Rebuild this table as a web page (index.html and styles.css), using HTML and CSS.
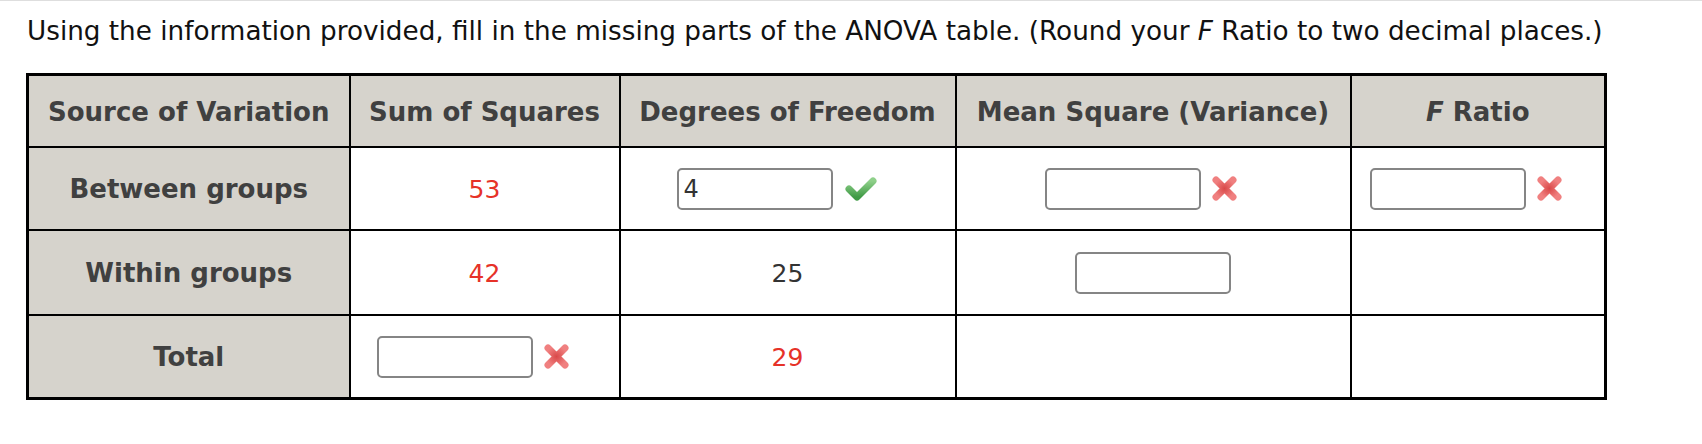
FILE: index.html
```html
<!DOCTYPE html>
<html>
<head>
<meta charset="utf-8">
<link rel="stylesheet" href="styles.css">
</head>
<body>
<div class="page">
  <p class="question">Using the information provided, fill in the missing parts of the ANOVA table. (Round your <i>F</i> Ratio to two decimal places.)</p>
  <table class="anova">
    <colgroup>
      <col class="c1"><col class="c2"><col class="c3"><col class="c4"><col class="c5">
    </colgroup>
    <thead>
      <tr class="r-head">
        <th>Source of Variation</th>
        <th>Sum of Squares</th>
        <th>Degrees of Freedom</th>
        <th>Mean Square (Variance)</th>
        <th><i>F</i> Ratio</th>
      </tr>
    </thead>
    <tbody>
      <tr class="r1">
        <th>Between groups</th>
        <td class="num red">53</td>
        <td><div class="field"><input class="box" type="text" value="4"><span class="mark mark-ok"><svg width="32" height="26" viewBox="0 0 32 26"><defs><linearGradient id="gchk" x1="0" y1="0" x2="0" y2="1"><stop offset="0" stop-color="#8fd08a"/><stop offset="1" stop-color="#3f9a45"/></linearGradient></defs><polyline points="4,13 12,21 28,5" fill="none" stroke="url(#gchk)" stroke-width="7" stroke-linecap="round" stroke-linejoin="round"/></svg></span></div></td>
        <td><div class="field"><input class="box" type="text" value=""><span class="mark"><svg width="27" height="27" viewBox="0 0 27 27"><defs><radialGradient id="gx1" cx="0.5" cy="0.5" r="0.6"><stop offset="0" stop-color="#d94848"/><stop offset="1" stop-color="#f08080"/></radialGradient></defs><path d="M5,5 L22,22 M22,5 L5,22" fill="none" stroke="url(#gx1)" stroke-width="7" stroke-linecap="round"/></svg></span></div></td>
        <td><div class="field"><input class="box" type="text" value=""><span class="mark"><svg width="27" height="27" viewBox="0 0 27 27"><path d="M5,5 L22,22 M22,5 L5,22" fill="none" stroke="url(#gx1)" stroke-width="7" stroke-linecap="round"/></svg></span></div></td>
      </tr>
      <tr class="r2">
        <th>Within groups</th>
        <td class="num red">42</td>
        <td class="num">25</td>
        <td><div class="field"><input class="box" type="text" value=""></div></td>
        <td></td>
      </tr>
      <tr class="r3">
        <th>Total</th>
        <td><div class="field"><input class="box" type="text" value=""><span class="mark"><svg width="27" height="27" viewBox="0 0 27 27"><path d="M5,5 L22,22 M22,5 L5,22" fill="none" stroke="url(#gx1)" stroke-width="7" stroke-linecap="round"/></svg></span></div></td>
        <td class="num red">29</td>
        <td></td>
        <td></td>
      </tr>
    </tbody>
  </table>
</div>
</body>
</html>
```

FILE: styles.css
```css
html, body {
  margin: 0;
  padding: 0;
  background: #fff;
}
.page {
  border-top: 1px solid #dedede;
  padding: 0 0 0 26px;
  font-family: "DejaVu Sans", Verdana, sans-serif;
  color: #111;
}
.question {
  margin: 16px 0 27px 1px;
  font-size: 26.25px;
  line-height: 29px;
  white-space: nowrap;
}
.anova {
  border-collapse: collapse;
  table-layout: fixed;
  width: 1578px;
  border: 3px solid #000;
}
.c1 { width: 322px; }
.c2 { width: 270px; }
.c3 { width: 336px; }
.c4 { width: 395px; }
.c5 { width: 255px; }
.anova th, .anova td {
  border: 2px solid #000;
  padding: 0;
  text-align: center;
  vertical-align: middle;
}
.anova th {
  background: #d6d3cc;
  color: #404040;
  font-weight: bold;
  font-size: 26px;
  padding-top: 2px;
}
.anova td {
  background: #fff;
}
.anova td.num {
  padding-top: 3px;
}
.r-head { height: 72px; }
.r1 { height: 83px; }
.r2 { height: 85px; }
.r3 { height: 84px; }
.num {
  font-size: 25px;
  color: #333;
}
.num.red {
  color: #e63228;
}
.field {
  display: flex;
  justify-content: center;
  align-items: center;
  gap: 10px;
  padding-top: 1px;
}
.box {
  width: 156px;
  height: 42px;
  box-sizing: border-box;
  border: 2px solid #858585;
  border-radius: 5px;
  padding: 0 5px;
  font-family: "DejaVu Sans", Verdana, sans-serif;
  font-size: 24px;
  color: #333;
  background: #fff;
  margin: 0;
}
.mark {
  width: 50px;
  display: flex;
  align-items: center;
  justify-content: flex-start;
}
.mark-ok {
  width: 56px;
  padding-left: 2px;
  box-sizing: border-box;
}
.mark svg {
  display: block;
}
```
